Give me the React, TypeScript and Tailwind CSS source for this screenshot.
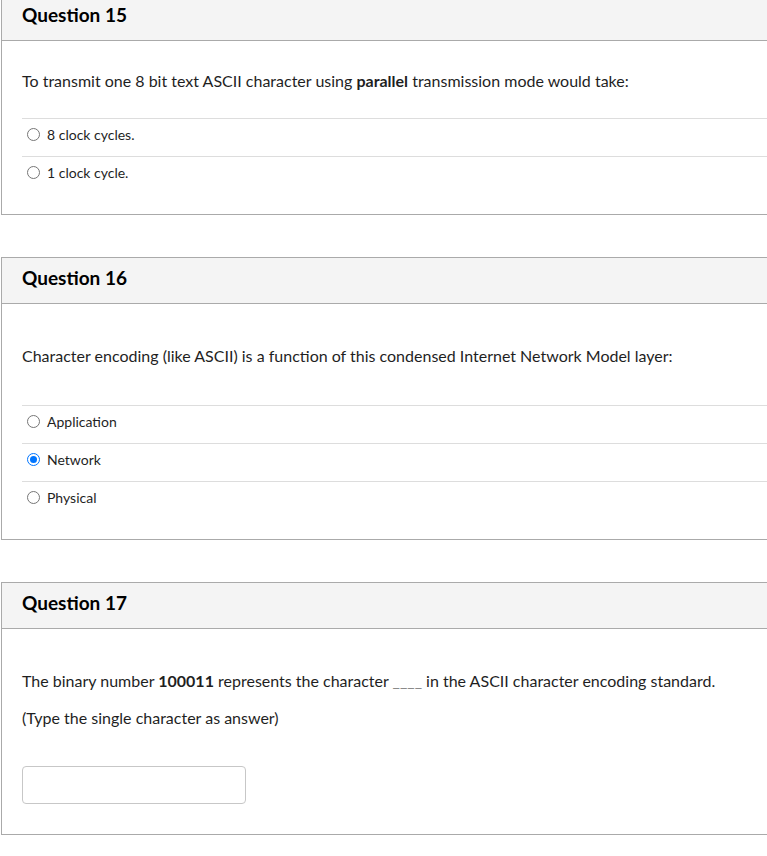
import React from 'react';

type Option = { label: string; checked?: boolean };

function Radio({ checked }: { checked?: boolean }) {
  return (
    <span
      className={`inline-flex items-center justify-center w-[13px] h-[13px] rounded-full border bg-white shrink-0 ${
        checked ? 'border-[#0075ff]' : 'border-[#767676]'
      }`}
    >
      {checked && <span className="w-[7px] h-[7px] rounded-full bg-[#0075ff]" />}
    </span>
  );
}

function Options({ options }: { options: Option[] }) {
  return (
    <div>
      {options.map((o) => (
        <div key={o.label} className="h-[38px] border-t border-[#dddddd] flex items-center pl-[5px] pb-[6px] gap-[7px]">
          <Radio checked={o.checked} />
          <span className="text-[14px] text-[#1f1f1f]">{o.label}</span>
        </div>
      ))}
    </div>
  );
}

function Card({ title, children }: { title: string; children: React.ReactNode }) {
  return (
    <div className="ml-[1px] w-[800px] border border-[#aaaaaa]">
      <div className="h-[46px] bg-[#f4f4f4] border-b border-[#aaaaaa] pl-5 flex items-center pb-[5px]">
        <h2 className="text-[19px] font-bold text-black">{title}</h2>
      </div>
      {children}
    </div>
  );
}

export default function App() {
  return (
    <div className="min-h-screen bg-white overflow-hidden font-['Lato','Noto_Sans',sans-serif] text-[#1f1f1f]">
      <div className="-mt-[6px] flex flex-col gap-[42px] pb-10">
        <Card title="Question 15">
          <div className="pl-5 pt-[28px] pb-[20px]">
            <p className="text-[16px] leading-6 mb-[25px]">
              To transmit one 8 bit text ASCII character using <b>parallel</b> transmission mode would take:
            </p>
            <Options options={[{ label: '8 clock cycles.' }, { label: '1 clock cycle.' }]} />
          </div>
        </Card>

        <Card title="Question 16">
          <div className="pl-5 pt-[40px] pb-[20px]">
            <p className="text-[16px] leading-6 mb-[37px]">
              Character encoding (like ASCII) is a function of this condensed Internet Network Model layer:
            </p>
            <Options options={[{ label: 'Application' }, { label: 'Network', checked: true }, { label: 'Physical' }]} />
          </div>
        </Card>

        <Card title="Question 17">
          <div className="pl-5 pt-[40px] pb-[30px]">
            <p className="text-[16px] leading-6">
              The binary number <b>100011</b> represents the character <span className="text-[#8a8a8a]">____</span> in the
              ASCII character encoding standard.
            </p>
            <p className="text-[16px] leading-6 mt-[13px]">(Type the single character as answer)</p>
            <input
              type="text"
              aria-label="answer"
              className="mt-[36px] block w-[224px] h-[38px] border border-[#c7c7c7] rounded-[4px] bg-white outline-none"
            />
          </div>
        </Card>
      </div>
    </div>
  );
}
